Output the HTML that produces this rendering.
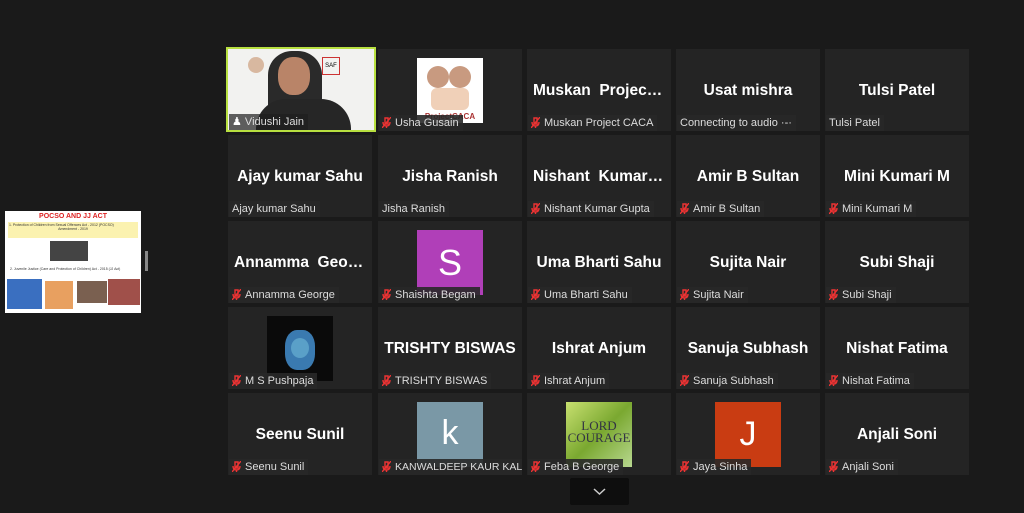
<!DOCTYPE html>
<html><head><meta charset="utf-8"><style>
body{margin:0;width:1024px;height:513px;background:#1a1a1a;overflow:hidden;font-family:"Liberation Sans","DejaVu Sans",sans-serif;position:relative}
.t{position:absolute;width:144px;height:82px;background:#242424;overflow:hidden}
.n{position:absolute;left:0;right:0;top:33px;text-align:center;color:#fff;font-weight:bold;font-size:15.5px;white-space:nowrap;overflow:hidden;text-overflow:ellipsis;padding:0 6px}
.l{position:absolute;left:1px;bottom:0px;height:16px;line-height:16px;background:rgba(40,40,40,.9);color:#ddd;font-size:11px;padding:0 4px 0 3px;white-space:nowrap}
.m{display:inline-block;width:9px;height:11px;vertical-align:-2px;margin-right:4px}
.av{position:absolute;left:39px;top:9px;width:66px;height:65px}
</style></head><body>
<div style="position:absolute;left:5px;top:211px;width:136px;height:102px;background:#fff">
<div style="text-align:center;color:#d22;font-weight:bold;font-size:7px;margin-top:2px">POCSO AND JJ ACT</div>
<div style="background:#fbf2b0;height:14px;margin:2px 3px;font-size:3.5px;color:#333;padding:1px">1. Protection of Children from Sexual Offences Act - 2012 (POCSO)<br><center>Amendment - 2019</center></div>
<div style="position:absolute;left:45px;top:30px;width:38px;height:20px;background:#444"></div>
<div style="position:absolute;left:5px;top:56px;font-size:3.5px;color:#333">2. Juvenile Justice (Care and Protection of Children) Act - 2015 (JJ Act)</div>
<div style="position:absolute;left:2px;top:68px;width:35px;height:30px;background:#3a6fc0"></div>
<div style="position:absolute;left:40px;top:70px;width:28px;height:28px;background:#e8a060"></div>
<div style="position:absolute;left:72px;top:70px;width:30px;height:22px;background:#7a6050"></div>
<div style="position:absolute;left:103px;top:68px;width:32px;height:26px;background:#a0504a"></div>
</div>
<div style="position:absolute;left:145px;top:251px;width:3px;height:20px;background:#888"></div>

<div class="t" style="left:226px;top:47px;width:146px;height:81px;background:#f2f2f0;border:2px solid #b8e040">
<div style="position:absolute;left:20px;top:8px;width:16px;height:16px;border-radius:50%;background:#d8b8a0"></div>
<div style="position:absolute;left:94px;top:8px;width:16px;height:16px;border:1px solid #c33;font-size:6px;line-height:16px;text-align:center">SAF</div>
<div style="position:absolute;left:40px;top:2px;width:54px;height:80px;background:#2a2a2a;border-radius:24px 24px 0 0"></div>
<div style="position:absolute;left:50px;top:8px;width:32px;height:38px;background:#b98468;border-radius:45%"></div>
<div style="position:absolute;left:28px;top:50px;width:95px;height:40px;background:#262626;border-radius:30px 30px 0 0"></div>
<div class="l" style="background:rgba(30,30,30,.7)"><span style="color:#fff">♟</span> Vidushi Jain</div></div>
<div class="t" style="left:378px;top:49px"><div class="av" style="background:#fff"><div style="position:absolute;left:10px;top:8px;width:22px;height:22px;border-radius:50%;background:#c89a80"></div><div style="position:absolute;left:32px;top:8px;width:22px;height:22px;border-radius:50%;background:#c89a80"></div><div style="position:absolute;left:14px;top:30px;width:38px;height:22px;background:#f0d0b8;border-radius:6px"></div><div style="position:absolute;bottom:2px;width:66px;text-align:center;font-size:8px;color:#a33;font-weight:bold">ProjectCACA</div></div><div class="l"><svg class="m" viewBox="0 0 9 11"><path d="M3 1h3v6H3z M1 5q0 4 3.5 4t3.5-4 M4.5 9v2 M0 11L9 0" stroke="#e33" stroke-width="1.4" fill="none"/></svg>Usha Gusain</div></div>
<div class="t" style="left:527px;top:49px"><div class="n">Muskan&nbsp; Project CACA</div><div class="l"><svg class="m" viewBox="0 0 9 11"><path d="M3 1h3v6H3z M1 5q0 4 3.5 4t3.5-4 M4.5 9v2 M0 11L9 0" stroke="#e33" stroke-width="1.4" fill="none"/></svg>Muskan Project CACA</div></div>
<div class="t" style="left:676px;top:49px"><div class="n">Usat mishra</div><div class="l">Connecting to audio ·-·</div></div>
<div class="t" style="left:825px;top:49px"><div class="n">Tulsi Patel</div><div class="l">Tulsi Patel</div></div>
<div class="t" style="left:228px;top:135px"><div class="n">Ajay kumar Sahu</div><div class="l">Ajay kumar Sahu</div></div>
<div class="t" style="left:378px;top:135px"><div class="n">Jisha Ranish</div><div class="l">Jisha Ranish</div></div>
<div class="t" style="left:527px;top:135px"><div class="n">Nishant&nbsp; Kumar Gupta</div><div class="l"><svg class="m" viewBox="0 0 9 11"><path d="M3 1h3v6H3z M1 5q0 4 3.5 4t3.5-4 M4.5 9v2 M0 11L9 0" stroke="#e33" stroke-width="1.4" fill="none"/></svg>Nishant Kumar Gupta</div></div>
<div class="t" style="left:676px;top:135px"><div class="n">Amir B Sultan</div><div class="l"><svg class="m" viewBox="0 0 9 11"><path d="M3 1h3v6H3z M1 5q0 4 3.5 4t3.5-4 M4.5 9v2 M0 11L9 0" stroke="#e33" stroke-width="1.4" fill="none"/></svg>Amir B Sultan</div></div>
<div class="t" style="left:825px;top:135px"><div class="n">Mini Kumari M</div><div class="l"><svg class="m" viewBox="0 0 9 11"><path d="M3 1h3v6H3z M1 5q0 4 3.5 4t3.5-4 M4.5 9v2 M0 11L9 0" stroke="#e33" stroke-width="1.4" fill="none"/></svg>Mini Kumari M</div></div>
<div class="t" style="left:228px;top:221px"><div class="n">Annamma&nbsp; George</div><div class="l"><svg class="m" viewBox="0 0 9 11"><path d="M3 1h3v6H3z M1 5q0 4 3.5 4t3.5-4 M4.5 9v2 M0 11L9 0" stroke="#e33" stroke-width="1.4" fill="none"/></svg>Annamma George</div></div>
<div class="t" style="left:378px;top:221px"><div class="av" style="background:#b03fb8;color:#fff;font-size:36px;text-align:center;line-height:65px">S</div><div class="l"><svg class="m" viewBox="0 0 9 11"><path d="M3 1h3v6H3z M1 5q0 4 3.5 4t3.5-4 M4.5 9v2 M0 11L9 0" stroke="#e33" stroke-width="1.4" fill="none"/></svg>Shaishta Begam</div></div>
<div class="t" style="left:527px;top:221px"><div class="n">Uma Bharti Sahu</div><div class="l"><svg class="m" viewBox="0 0 9 11"><path d="M3 1h3v6H3z M1 5q0 4 3.5 4t3.5-4 M4.5 9v2 M0 11L9 0" stroke="#e33" stroke-width="1.4" fill="none"/></svg>Uma Bharti Sahu</div></div>
<div class="t" style="left:676px;top:221px"><div class="n">Sujita Nair</div><div class="l"><svg class="m" viewBox="0 0 9 11"><path d="M3 1h3v6H3z M1 5q0 4 3.5 4t3.5-4 M4.5 9v2 M0 11L9 0" stroke="#e33" stroke-width="1.4" fill="none"/></svg>Sujita Nair</div></div>
<div class="t" style="left:825px;top:221px"><div class="n">Subi Shaji</div><div class="l"><svg class="m" viewBox="0 0 9 11"><path d="M3 1h3v6H3z M1 5q0 4 3.5 4t3.5-4 M4.5 9v2 M0 11L9 0" stroke="#e33" stroke-width="1.4" fill="none"/></svg>Subi Shaji</div></div>
<div class="t" style="left:228px;top:307px"><div class="av" style="background:#0a0a0a"><div style="position:absolute;left:18px;top:14px;width:30px;height:40px;background:#3a7ab0;border-radius:40%"></div><div style="position:absolute;left:24px;top:22px;width:18px;height:20px;background:#5aa0c8;border-radius:50%"></div></div><div class="l"><svg class="m" viewBox="0 0 9 11"><path d="M3 1h3v6H3z M1 5q0 4 3.5 4t3.5-4 M4.5 9v2 M0 11L9 0" stroke="#e33" stroke-width="1.4" fill="none"/></svg>M S Pushpaja</div></div>
<div class="t" style="left:378px;top:307px"><div class="n">TRISHTY BISWAS</div><div class="l"><svg class="m" viewBox="0 0 9 11"><path d="M3 1h3v6H3z M1 5q0 4 3.5 4t3.5-4 M4.5 9v2 M0 11L9 0" stroke="#e33" stroke-width="1.4" fill="none"/></svg>TRISHTY BISWAS</div></div>
<div class="t" style="left:527px;top:307px"><div class="n">Ishrat Anjum</div><div class="l"><svg class="m" viewBox="0 0 9 11"><path d="M3 1h3v6H3z M1 5q0 4 3.5 4t3.5-4 M4.5 9v2 M0 11L9 0" stroke="#e33" stroke-width="1.4" fill="none"/></svg>Ishrat Anjum</div></div>
<div class="t" style="left:676px;top:307px"><div class="n">Sanuja Subhash</div><div class="l"><svg class="m" viewBox="0 0 9 11"><path d="M3 1h3v6H3z M1 5q0 4 3.5 4t3.5-4 M4.5 9v2 M0 11L9 0" stroke="#e33" stroke-width="1.4" fill="none"/></svg>Sanuja Subhash</div></div>
<div class="t" style="left:825px;top:307px"><div class="n">Nishat Fatima</div><div class="l"><svg class="m" viewBox="0 0 9 11"><path d="M3 1h3v6H3z M1 5q0 4 3.5 4t3.5-4 M4.5 9v2 M0 11L9 0" stroke="#e33" stroke-width="1.4" fill="none"/></svg>Nishat Fatima</div></div>
<div class="t" style="left:228px;top:393px"><div class="n">Seenu Sunil</div><div class="l"><svg class="m" viewBox="0 0 9 11"><path d="M3 1h3v6H3z M1 5q0 4 3.5 4t3.5-4 M4.5 9v2 M0 11L9 0" stroke="#e33" stroke-width="1.4" fill="none"/></svg>Seenu Sunil</div></div>
<div class="t" style="left:378px;top:393px"><div class="av" style="background:#7a98a6;color:#fff;font-size:34px;text-align:center;line-height:62px">k</div><div class="l" style="font-size:10.5px"><svg class="m" viewBox="0 0 9 11"><path d="M3 1h3v6H3z M1 5q0 4 3.5 4t3.5-4 M4.5 9v2 M0 11L9 0" stroke="#e33" stroke-width="1.4" fill="none"/></svg>KANWALDEEP KAUR KALSI</div></div>
<div class="t" style="left:527px;top:393px"><div class="av" style="background:linear-gradient(135deg,#c8e070,#7aa830 50%,#b8d890);color:#334;font-family:'Liberation Serif',serif;font-size:13px;text-align:center;line-height:12px"><div style="margin-top:18px">LORD<br>COURAGE</div></div><div class="l"><svg class="m" viewBox="0 0 9 11"><path d="M3 1h3v6H3z M1 5q0 4 3.5 4t3.5-4 M4.5 9v2 M0 11L9 0" stroke="#e33" stroke-width="1.4" fill="none"/></svg>Feba B George</div></div>
<div class="t" style="left:676px;top:393px"><div class="av" style="background:#c93c12;color:#fff;font-size:34px;text-align:center;line-height:65px">J</div><div class="l"><svg class="m" viewBox="0 0 9 11"><path d="M3 1h3v6H3z M1 5q0 4 3.5 4t3.5-4 M4.5 9v2 M0 11L9 0" stroke="#e33" stroke-width="1.4" fill="none"/></svg>Jaya Sinha</div></div>
<div class="t" style="left:825px;top:393px"><div class="n">Anjali Soni</div><div class="l"><svg class="m" viewBox="0 0 9 11"><path d="M3 1h3v6H3z M1 5q0 4 3.5 4t3.5-4 M4.5 9v2 M0 11L9 0" stroke="#e33" stroke-width="1.4" fill="none"/></svg>Anjali Soni</div></div>
<div style="position:absolute;left:570px;top:478px;width:59px;height:27px;background:#0e0e0e;border-radius:2px"><svg width="59" height="27"><path d="M24 11l5.5 5 5.5-5" stroke="#ccc" stroke-width="1.5" fill="none"/></svg></div>
</body></html>
